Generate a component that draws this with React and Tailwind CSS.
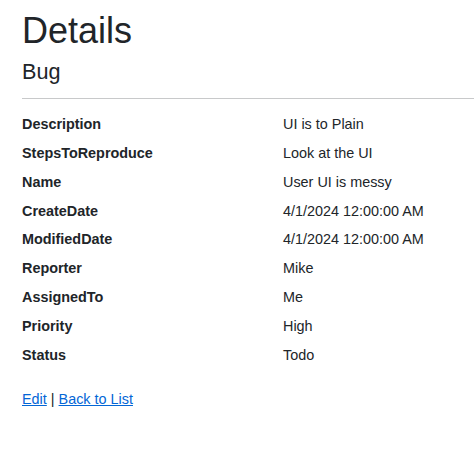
export default function App() {
  const rows = [
    ["Description", "UI is to Plain"],
    ["StepsToReproduce", "Look at the UI"],
    ["Name", "User UI is messy"],
    ["CreateDate", "4/1/2024 12:00:00 AM"],
    ["ModifiedDate", "4/1/2024 12:00:00 AM"],
    ["Reporter", "Mike"],
    ["AssignedTo", "Me"],
    ["Priority", "High"],
    ["Status", "Todo"],
  ];
  return (
    <div
      className="min-h-[452px] w-[474px] overflow-hidden bg-white pl-[22px] pt-[9px] text-[#212529]"
      style={{ fontFamily: '"Liberation Sans", Arial, sans-serif' }}
    >
      <h1 className="mb-[7.2px] text-[36px] font-normal leading-[43.2px]">Details</h1>
      <div>
        <h4 className="text-[21.6px] font-normal leading-[25.92px]">Bug</h4>
        <hr className="mt-[13px] mb-[14.4px] border-t border-[#c8c9ca]" />
        <dl className="flex flex-col text-[14.4px] leading-[21.6px]">
          {rows.map(([k, v]) => (
            <div key={k} className="flex h-[28.95px] w-full">
              <dt className="w-[261px] shrink-0 font-bold">{k}</dt>
              <dd>{v}</dd>
            </div>
          ))}
        </dl>
      </div>
      <div className="mt-[14.4px] text-[14.4px] leading-[21.6px]">
        <a href="#" className="text-[#0366d6] underline">Edit</a>
        {" | "}
        <a href="#" className="text-[#0366d6] underline">Back to List</a>
      </div>
    </div>
  );
}
